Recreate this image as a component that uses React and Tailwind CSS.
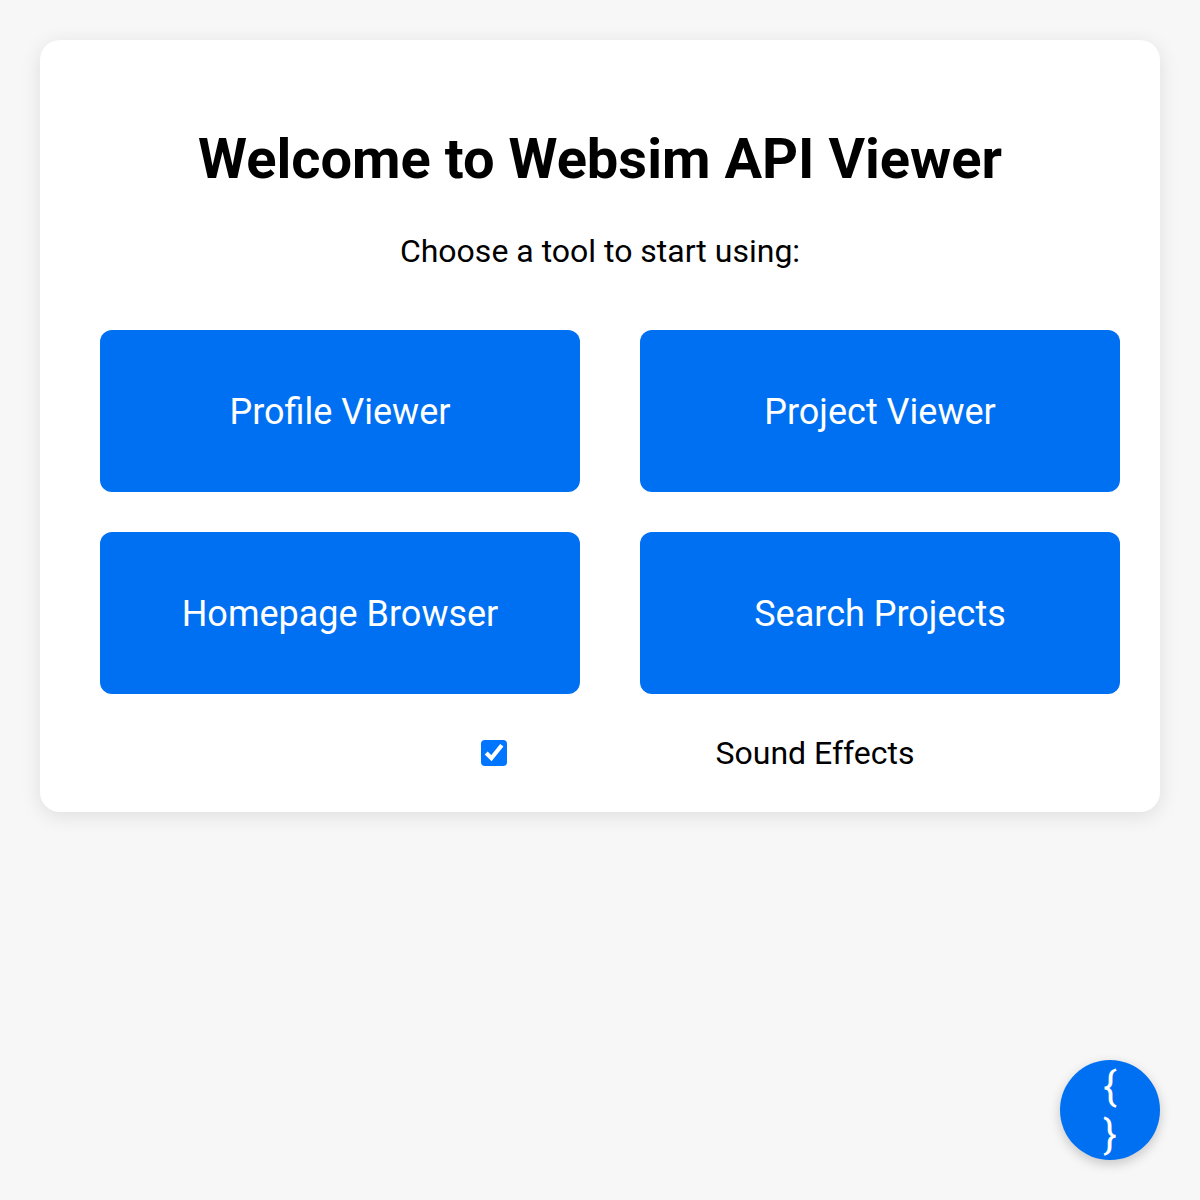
export default function App() {
  const tools = ["Profile Viewer", "Project Viewer", "Homepage Browser", "Search Projects"];
  return (
    <div className="relative min-h-[1200px] bg-[#f7f7f7] p-10 font-['Roboto',sans-serif] text-black">
      <div className="rounded-[20px] bg-white pt-[86px] pb-10 pl-[60px] pr-10 shadow-[0_4px_20px_rgba(0,0,0,0.1)]">
        <h1 className="mb-10 -ml-5 text-center text-[56px] leading-[66px] font-bold">Welcome to Websim API Viewer</h1>
        <p className="mb-[60px] -ml-5 text-center text-[32px] leading-[38px]">Choose a tool to start using:</p>
        <div className="grid grid-cols-2 gap-x-[60px] gap-y-10">
          {tools.map((t) => (
            <button key={t} className="h-[162px] rounded-xl bg-[#0070f3] pt-[2px] text-[36px] text-white">{t}</button>
          ))}
        </div>
        <label className="mt-10 flex items-center justify-center text-[32px] leading-[38px]">
          <span className="flex w-[378px] justify-center">
            <input type="checkbox" defaultChecked className="h-[13px] w-[13px] [zoom:2]" />
          </span>
          <span className="ml-[32px]">Sound Effects</span>
        </label>
      </div>
      <button className="absolute top-[1060px] left-[1060px] flex h-[100px] w-[100px] flex-col items-center justify-center rounded-full bg-[#0070f3] pt-[2px] text-[40px] leading-[48px] text-white shadow-[0_4px_12px_rgba(0,0,0,0.2)]">
        <span>{"{"}</span>
        <span>{"}"}</span>
      </button>
    </div>
  );
}
